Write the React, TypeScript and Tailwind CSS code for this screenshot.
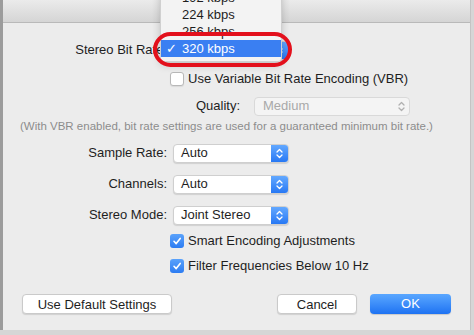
import React from 'react';

const font = { fontFamily: '"Liberation Sans", Arial, sans-serif' };

const Arrows: React.FC<{ color: string }> = ({ color }) => (
  <svg width="7" height="11" viewBox="0 0 7 11" fill="none">
    <path d="M1 4L3.5 1.5L6 4" stroke={color} strokeWidth="1.3" strokeLinecap="round" strokeLinejoin="round" />
    <path d="M1 7L3.5 9.5L6 7" stroke={color} strokeWidth="1.3" strokeLinecap="round" strokeLinejoin="round" />
  </svg>
);

const Popup: React.FC<{ value: string; width: string }> = ({ value, width }) => (
  <div
    className={`${width} h-[19px] flex items-center bg-white rounded-[4px] border border-[#cfcfcf] shadow-[0_1px_1px_rgba(0,0,0,0.12)] overflow-hidden`}
  >
    <span className="flex-1 pl-[7px] text-[13px] text-[#1e1e1e]">{value}</span>
    <div className="w-[17px] h-full flex items-center justify-center bg-gradient-to-b from-[#62a8ff] to-[#2778f4]">
      <Arrows color="#ffffff" />
    </div>
  </div>
);

const Check: React.FC<{ checked?: boolean }> = ({ checked }) =>
  checked ? (
    <div className="w-[14px] h-[14px] rounded-[3px] bg-gradient-to-b from-[#5aa2fb] to-[#2c7cf2] flex items-center justify-center">
      <svg width="10" height="10" viewBox="0 0 10 10" fill="none">
        <path d="M2 5.3L4.2 7.6L8.2 2.4" stroke="#fff" strokeWidth="1.6" strokeLinecap="round" strokeLinejoin="round" />
      </svg>
    </div>
  ) : (
    <div className="w-[14px] h-[14px] rounded-[3px] bg-white border border-[#b8b8b8] shadow-[0_1px_1px_rgba(0,0,0,0.08)]" />
  );

const LabelRow: React.FC<{ label: string; value: string; mt: string }> = ({ label, value, mt }) => (
  <div className={`flex items-center h-[20px] ${mt}`}>
    <div className="w-[164px] text-right text-[13px] text-[#1e1e1e]">{label}</div>
    <div className="ml-[6px]">
      <Popup value={value} width="w-[116px]" />
    </div>
  </div>
);

const CheckRow: React.FC<{ label: string; checked?: boolean; mt: string }> = ({ label, checked, mt }) => (
  <div className={`flex items-center h-[18px] pl-[167px] ${mt}`}>
    <Check checked={checked} />
    <span className="ml-[4px] text-[13px] text-[#1e1e1e]">{label}</span>
  </div>
);

const menuItems = ['192 kbps', '224 kbps', '256 kbps', '320 kbps'];

export default function App() {
  return (
    <div className="w-[474px] h-[335px] bg-[#d6d6d6] relative overflow-hidden" style={font}>
      <div className="flex h-[330px]">
        <div className="w-[3px] bg-[#9c9c9c]" />
        <div className="w-[468px] flex flex-col bg-[#ececec] border-r border-[#c4c4c4]">
          {/* Title bar */}
          <div className="h-[23px] bg-gradient-to-b from-[#ebebeb] to-[#d5d5d5] border-b border-[#b9b9b9]" />

          {/* Content */}
          <div className="flex flex-col">
            <LabelRow label="Stereo Bit Rate:" value="320 kbps" mt="mt-[17px]" />
            <CheckRow label="Use Variable Bit Rate Encoding (VBR)" mt="mt-[10px]" />

            <div className="flex items-center h-[20px] mt-[8px]">
              <div className="w-[237px] text-right text-[13px] text-[#1e1e1e]">Quality:</div>
              <div className="ml-[14px] w-[156px] h-[19px] flex items-center bg-[#f4f4f4] rounded-[4px] border border-[#d9d9d9]">
                <span className="flex-1 pl-[8px] text-[13px] text-[#a9a9a9]">Medium</span>
                <div className="pr-[4px]">
                  <Arrows color="#b0b0b0" />
                </div>
              </div>
            </div>

            <div className="h-[14px] mt-[4px] pl-[17px] flex items-center text-[11.5px] text-[#8c8c8c] whitespace-nowrap">
              (With VBR enabled, bit rate settings are used for a guaranteed minimum bit rate.)
            </div>

            <LabelRow label="Sample Rate:" value="Auto" mt="mt-[9px]" />
            <LabelRow label="Channels:" value="Auto" mt="mt-[11px]" />
            <LabelRow label="Stereo Mode:" value="Joint Stereo" mt="mt-[11px]" />

            <CheckRow label="Smart Encoding Adjustments" checked mt="mt-[7px]" />
            <CheckRow label="Filter Frequencies Below 10 Hz" checked mt="mt-[7px]" />

            {/* Buttons */}
            <div className="flex items-center mt-[19px] px-[19px]">
              <button className="w-[150px] h-[20px] bg-white rounded-[4px] border border-[#cacaca] shadow-[0_1px_1px_rgba(0,0,0,0.12)] text-[13px] text-[#1e1e1e]">
                Use Default Settings
              </button>
              <div className="flex-1" />
              <button className="w-[80px] h-[20px] bg-white rounded-[4px] border border-[#cacaca] shadow-[0_1px_1px_rgba(0,0,0,0.12)] text-[13px] text-[#1e1e1e]">
                Cancel
              </button>
              <button className="ml-[13px] w-[81px] h-[20px] rounded-[4px] bg-gradient-to-b from-[#5aa7ff] to-[#1d72f2] shadow-[0_1px_1px_rgba(0,0,0,0.15)] text-[13px] text-white">
                OK
              </button>
            </div>
          </div>
        </div>
      </div>

      {/* Open popup menu */}
      <div className="absolute left-[160px] top-[-11px] w-[122px] pb-[4px] bg-[#f3f3f3] border-x border-b border-[#d0d0d0] shadow-[0_3px_8px_rgba(0,0,0,0.2)] rounded-b-[4px]">
        {menuItems.map((item, i) => {
          const selected = i === menuItems.length - 1;
          return (
            <div
              key={item}
              className={`h-[17px] flex items-center relative text-[13px] ${
                selected ? 'bg-[#3a7ff2] text-white' : 'text-[#1e1e1e]'
              }`}
            >
              {selected && <span className="absolute left-[5px] text-[13px]">✓</span>}
              <span className="pl-[21px]">{item}</span>
            </div>
          );
        })}
      </div>

      {/* Red highlight ring */}
      <div className="absolute left-[153px] top-[32px] w-[139px] h-[35px] rounded-full border-[4px] border-[#e3101c]" />
    </div>
  );
}
